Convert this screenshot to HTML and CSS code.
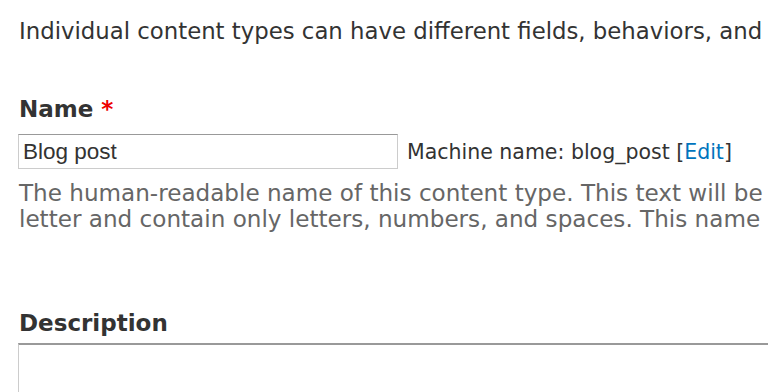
FILE: index.html
```html
<!DOCTYPE html>
<html lang="en">
<head>
  <meta charset="UTF-8" />
  <title>Add content type</title>
  <link rel="stylesheet" href="styles.css">
</head>
<body>
  <p class="intro">Individual content types can have different fields, behaviors, and</p>

  <div class="form-item">
    <label for="edit-name">Name <span class="required">*</span></label>
    <div class="name-row">
      <input id="edit-name" type="text" value="Blog post" />
      <span class="machine-name">Machine name: blog_post [<a href="#">Edit</a>]</span>
    </div>
    <div class="description">The human-readable name of this content type. This text will be<br>letter and contain only letters, numbers, and spaces. This name</div>
  </div>

  <div class="form-item form-item-description">
    <label for="edit-description">Description</label>
    <textarea id="edit-description"></textarea>
  </div>
</body>
</html>
```

FILE: styles.css
```css
body {
  font-family: 'DejaVu Sans', Verdana, sans-serif;
  background: #fff;
  color: #333;
  margin: 0;
  padding: 0 0 0 19px;
  overflow: hidden;
}
.intro {
  font-size: 22.8px;
  line-height: 28px;
  margin: 17px 0 0;
  white-space: nowrap;
}
.form-item {
  margin-top: 50px;
}
.form-item-description {
  margin-top: 77px;
}
label {
  display: block;
  font-weight: bold;
  font-size: 23px;
  line-height: 28px;
  color: #333;
  margin-bottom: 11px;
}
.required {
  color: #e00;
}
.name-row {
  display: flex;
  align-items: center;
}
.name-row input {
  font-family: 'Liberation Sans', Arial, sans-serif;
  font-size: 22.5px;
  color: #333;
  width: 380px;
  height: 35px;
  box-sizing: border-box;
  margin: 0 0 0 -1px;
  padding: 2px 4px;
  border: 1px solid #ccc;
  border-top-color: #999;
  border-radius: 0;
}
.machine-name {
  font-size: 20.5px;
  margin-left: 9px;
  white-space: nowrap;
}
.machine-name a {
  color: #0074bd;
  text-decoration: none;
}
.description {
  font-size: 23.1px;
  color: #666;
  line-height: 26px;
  margin-top: 11px;
  white-space: nowrap;
}
.form-item-description label {
  margin-bottom: 6px;
}
textarea {
  display: block;
  width: 1000px;
  height: 120px;
  margin-left: -1px;
  border: 1px solid #ccc;
  border-top: 2px solid #999;
  border-radius: 0;
  resize: none;
}
```
